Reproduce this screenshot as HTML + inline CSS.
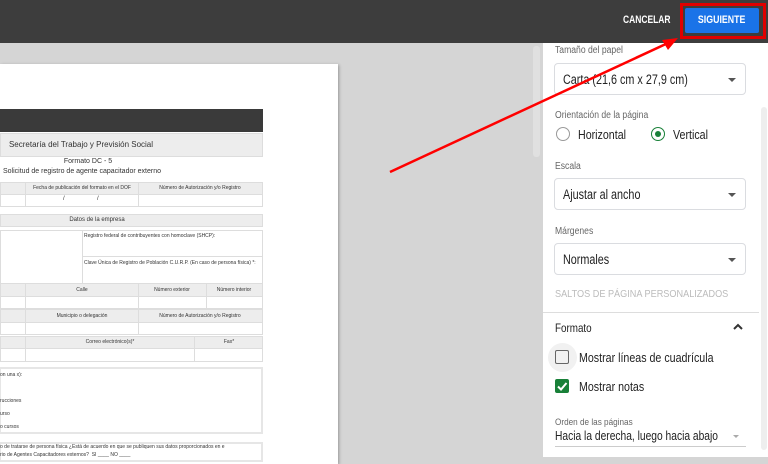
<!DOCTYPE html>
<html><head><meta charset="utf-8"><style>
*{margin:0;padding:0;box-sizing:border-box}
body{width:768px;height:457px;overflow:hidden;background:#d5d5d5;font-family:"Liberation Sans",Arial,sans-serif;position:relative}
.a{position:absolute}
.t{position:absolute;font-size:6px;color:#333;white-space:nowrap}
.c{transform:translateX(-50%)}
.hd{position:absolute;background:#ededed;border:1px solid #ddd}
.bx{position:absolute;border:1px solid #ddd;background:#fff}
.lbl{position:absolute;font-size:10px;color:#666;white-space:nowrap;transform:scaleX(.86);transform-origin:left}
.sel{position:absolute;left:554px;width:192px;border:1px solid #dadce0;border-radius:4px;background:#fff;font-size:13.5px;color:#222;padding-left:8px;white-space:nowrap}
.s{display:inline-block;transform:scaleX(.8);transform-origin:left}
.tri{position:absolute;right:9px;top:14px;width:0;height:0;border-left:4px solid transparent;border-right:4px solid transparent;border-top:4px solid #555}
.tx{position:absolute;font-size:13px;color:#222;white-space:nowrap;transform:scaleX(.82);transform-origin:left}
</style></head><body>
<div class="a" style="left:0;top:0;width:768px;height:43px;background:#3d3d3d"></div>
<div class="a" style="left:623px;top:14px;font-size:11px;font-weight:bold;color:#fff;transform:scaleX(.77);transform-origin:left;white-space:nowrap">CANCELAR</div>
<div class="a" style="left:680px;top:3px;width:86px;height:36px;border:3px solid #e00000"></div>
<div class="a" style="left:685px;top:8px;width:74px;height:25px;background:#1a73e8;border-radius:2px;color:#fff;font-size:11px;font-weight:bold;text-align:center;line-height:25px"><span style="display:inline-block;transform:scaleX(.8)">SIGUIENTE</span></div>

<!-- page -->
<div class="a" style="left:0;top:64px;width:338px;height:400px;background:#fff;box-shadow:1px 1px 3px rgba(0,0,0,.3)"></div>
<div class="a" style="left:0;top:109px;width:263px;height:23px;background:#3a3a3a"></div>
<div class="hd" style="left:0;top:133px;width:263px;height:24px"></div>
<div class="t c" style="left:81px;top:140px;font-size:8px">Secretaría del Trabajo y Previsión Social</div>
<div class="t c" style="left:88px;top:158px;font-size:7px">Formato DC - 5</div>
<div class="t c" style="left:82px;top:168px;font-size:7px">Solicitud de registro de agente capacitador externo</div>
<div class="hd" style="left:0;top:182px;width:263px;height:13px"></div>
<div class="bx" style="left:0;top:194px;width:263px;height:13px"></div>
<div class="a" style="left:25px;top:182px;width:1px;height:25px;background:#ddd"></div>
<div class="a" style="left:138px;top:182px;width:1px;height:25px;background:#ddd"></div>
<div class="t c" style="left:82px;top:185px;font-size:5px">Fecha de publicación del formato en el DOF</div>
<div class="t c" style="left:200px;top:185px;font-size:5px">Número de Autorización y/o Registro</div>
<div class="t" style="left:63px;top:196px">/</div><div class="t" style="left:97px;top:196px">/</div>
<div class="hd" style="left:0;top:214px;width:263px;height:13px"></div>
<div class="t c" style="left:97px;top:217px">Datos de la empresa</div>
<div class="bx" style="left:0;top:230px;width:263px;height:54px"></div>
<div class="a" style="left:82px;top:230px;width:1px;height:54px;background:#ddd"></div>
<div class="a" style="left:82px;top:256px;width:181px;height:1px;background:#ddd"></div>
<div class="t" style="left:84px;top:233px;font-size:5px">Registro federal de contribuyentes con homoclave (SHCP):</div>
<div class="t" style="left:84px;top:260px;font-size:5px">Clave Única de Registro de Población C.U.R.P. (En caso de persona física) *:</div>
<div class="hd" style="left:0;top:283px;width:263px;height:14px"></div>
<div class="bx" style="left:0;top:296px;width:263px;height:13px"></div>
<div class="a" style="left:25px;top:283px;width:1px;height:26px;background:#ddd"></div>
<div class="a" style="left:138px;top:283px;width:1px;height:26px;background:#ddd"></div>
<div class="a" style="left:206px;top:283px;width:1px;height:26px;background:#ddd"></div>
<div class="t c" style="left:82px;top:287px;font-size:5px">Calle</div>
<div class="t c" style="left:172px;top:287px;font-size:5px">Número exterior</div>
<div class="t c" style="left:234px;top:287px;font-size:5px">Número interior</div>
<div class="hd" style="left:0;top:309px;width:263px;height:14px"></div>
<div class="bx" style="left:0;top:322px;width:263px;height:13px"></div>
<div class="a" style="left:25px;top:309px;width:1px;height:26px;background:#ddd"></div>
<div class="a" style="left:138px;top:309px;width:1px;height:26px;background:#ddd"></div>
<div class="t c" style="left:82px;top:313px;font-size:5px">Municipio o delegación</div>
<div class="t c" style="left:200px;top:313px;font-size:5px">Número de Autorización y/o Registro</div>
<div class="hd" style="left:0;top:336px;width:263px;height:13px"></div>
<div class="bx" style="left:0;top:348px;width:263px;height:14px"></div>
<div class="a" style="left:25px;top:336px;width:1px;height:26px;background:#ddd"></div>
<div class="a" style="left:194px;top:336px;width:1px;height:26px;background:#ddd"></div>
<div class="t c" style="left:110px;top:339px;font-size:5px">Correo electrónico(s)*</div>
<div class="t c" style="left:229px;top:339px;font-size:5px">Fax*</div>
<div class="bx" style="left:-1px;top:367px;width:264px;height:67px;border-width:2px;border-color:#e6e6e6"></div>
<div class="t" style="left:0;top:372px;font-size:5px">on una x):</div>
<div class="t" style="left:0;top:398px;font-size:5px">rucciones</div>
<div class="t" style="left:0;top:411px;font-size:5px">urso</div>
<div class="t" style="left:0;top:424px;font-size:5px">o cursos</div>
<div class="bx" style="left:-1px;top:442px;width:264px;height:20px;border-width:2px;border-color:#e6e6e6"></div>
<div class="t" style="left:0;top:444px;font-size:5px">o de tratarse de persona física ¿Está de acuerdo en que se publiquen sus datos proporcionados en e</div>
<div class="t" style="left:0;top:452px;font-size:5px">rio de Agentes Capacitadores externos?&nbsp; SI ____ NO ____</div>

<div class="a" style="left:533px;top:46px;width:7px;height:111px;background:#e0e0e0;border-radius:3px"></div>
<div class="a" style="left:543px;top:43px;width:225px;height:414px;background:#fff"></div>
<div class="a" style="left:761px;top:107px;width:6px;height:343px;background:#eee;border-radius:3px"></div>
<div class="lbl" style="left:555px;top:45px">Tamaño del papel</div>
<div class="sel" style="top:63px;height:32px;line-height:31px"><span class="s">Carta (21,6 cm x 27,9 cm)</span><div class="tri"></div></div>
<div class="lbl" style="left:555px;top:110px">Orientación de la página</div>
<div class="a" style="left:556px;top:127px;width:14px;height:14px;border:1.5px solid #999;border-radius:50%"></div>
<div class="tx" style="left:578px;top:127px">Horizontal</div>
<div class="a" style="left:651px;top:127px;width:14px;height:14px;border:1.5px solid #188038;border-radius:50%"></div>
<div class="a" style="left:655px;top:131px;width:6px;height:6px;background:#188038;border-radius:50%"></div>
<div class="tx" style="left:673px;top:127px">Vertical</div>
<div class="lbl" style="left:555px;top:161px">Escala</div>
<div class="sel" style="top:178px;height:32px;line-height:31px"><span class="s">Ajustar al ancho</span><div class="tri"></div></div>
<div class="lbl" style="left:555px;top:226px">Márgenes</div>
<div class="sel" style="top:243px;height:32px;line-height:31px"><span class="s">Normales</span><div class="tri"></div></div>
<div class="a" style="left:555px;top:288px;font-size:10.5px;color:#bbb;white-space:nowrap;transform:scaleX(.87);transform-origin:left">SALTOS DE PÁGINA PERSONALIZADOS</div>
<div class="a" style="left:543px;top:312px;width:216px;height:1px;background:#ddd"></div>
<div class="tx" style="left:555px;top:321px;font-size:12px">Formato</div>
<svg class="a" style="left:732px;top:322px" width="12" height="10"><path d="M2 7 L6 3 L10 7" stroke="#333" stroke-width="2" fill="none"/></svg>
<div class="a" style="left:548px;top:343px;width:29px;height:29px;background:#f1f1f1;border-radius:50%"></div>
<div class="a" style="left:555px;top:350px;width:14px;height:14px;border:1.5px solid #666;border-radius:2px"></div>
<div class="tx" style="left:579px;top:350px">Mostrar líneas de cuadrícula</div>
<div class="a" style="left:555px;top:379px;width:14px;height:14px;background:#188038;border-radius:2px"></div>
<svg class="a" style="left:555px;top:379px" width="14" height="14"><path d="M3 7.5 L6 10.5 L11.5 4" stroke="#fff" stroke-width="2" fill="none"/></svg>
<div class="tx" style="left:579px;top:379px">Mostrar notas</div>
<div class="lbl" style="left:555px;top:417px;font-size:9.5px">Orden de las páginas</div>
<div class="tx" style="left:555px;top:429px;font-size:12.5px">Hacia la derecha, luego hacia abajo</div>
<div class="a" style="left:733px;top:435px;border-left:3.5px solid transparent;border-right:3.5px solid transparent;border-top:3.5px solid #aaa"></div>
<div class="a" style="left:555px;top:446px;width:191px;height:1px;background:#ccc"></div>

<svg class="a" style="left:0;top:0" width="768" height="457">
<line x1="390" y1="172" x2="668" y2="43" stroke="#f00" stroke-width="2.5"/>
<path d="M678 38 L662 40 L668 50 Z" fill="#f00"/>
</svg>
</body></html>
